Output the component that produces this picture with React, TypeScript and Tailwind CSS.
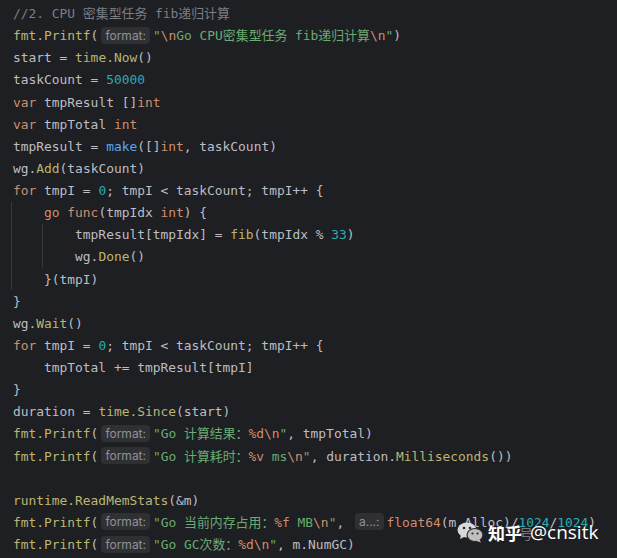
import type { ReactNode } from "react";

type Kind = "d" | "k" | "s" | "n" | "f" | "b" | "c";
type Tok = [string, Kind] | { hint: string };

const colors: Record<Kind, string> = {
  d: "text-[#bcbec4]",
  k: "text-[#cf8e6d]",
  s: "text-[#6aab73]",
  n: "text-[#2aacb8]",
  f: "text-[#bbb673]",
  b: "text-[#56a8f5]",
  c: "text-[#7a7e85]",
};

const printf: Tok[] = [["fmt.Printf", "f"], ["(", "d"], { hint: "format:" }];

const lines: Tok[][] = [
  [["//2. CPU 密集型任务 fib递归计算", "c"]],
  [...printf, ['"', "s"], ["\\n", "k"], ["Go CPU密集型任务 fib递归计算", "s"], ["\\n", "k"], ['"', "s"], [")", "d"]],
  [["start = ", "d"], ["time.Now", "f"], ["()", "d"]],
  [["taskCount = ", "d"], ["50000", "n"]],
  [["var", "k"], [" tmpResult []", "d"], ["int", "k"]],
  [["var", "k"], [" tmpTotal ", "d"], ["int", "k"]],
  [["tmpResult = ", "d"], ["make", "b"], ["([]", "d"], ["int", "k"], [", taskCount)", "d"]],
  [["wg.", "d"], ["Add", "f"], ["(taskCount)", "d"]],
  [["for", "k"], [" tmpI = ", "d"], ["0", "n"], ["; tmpI < taskCount; tmpI++ {", "d"]],
  [["    ", "d"], ["go func", "k"], ["(tmpIdx ", "d"], ["int", "k"], [") {", "d"]],
  [["        tmpResult[tmpIdx] = ", "d"], ["fib", "f"], ["(tmpIdx % ", "d"], ["33", "n"], [")", "d"]],
  [["        wg.", "d"], ["Done", "f"], ["()", "d"]],
  [["    }(tmpI)", "d"]],
  [["}", "d"]],
  [["wg.", "d"], ["Wait", "f"], ["()", "d"]],
  [["for", "k"], [" tmpI = ", "d"], ["0", "n"], ["; tmpI < taskCount; tmpI++ {", "d"]],
  [["    tmpTotal += tmpResult[tmpI]", "d"]],
  [["}", "d"]],
  [["duration = ", "d"], ["time.Since", "f"], ["(start)", "d"]],
  [...printf, ['"Go 计算结果：', "s"], ["%d\\n", "k"], ['"', "s"], [", tmpTotal)", "d"]],
  [...printf, ['"Go 计算耗时：', "s"], ["%v", "k"], [" ms", "s"], ["\\n", "k"], ['"', "s"], [", duration.", "d"], ["Milliseconds", "f"], ["())", "d"]],
  [],
  [["runtime.ReadMemStats", "f"], ["(&m)", "d"]],
  [...printf, ['"Go 当前内存占用：', "s"], ["%f", "k"], [" MB", "s"], ["\\n", "k"], ['"', "s"], [", ", "d"], { hint: "a...:" }, ["float64", "k"], ["(m.Alloc)/", "d"], ["1024", "n"], ["/", "d"], ["1024", "n"], [")", "d"]],
  [...printf, ['"Go GC次数：', "s"], ["%d\\n", "k"], ['"', "s"], [", m.NumGC)", "d"]],
];

const Hint = ({ children }: { children: ReactNode }) => (
  <span className="inline-block align-middle mx-[3px] -mt-[3px] px-[4px] h-[17px] leading-[17px] rounded-[4px] bg-[#2f3033] text-[#8f9298] text-[12px] font-['Inter',sans-serif]">
    {children}
  </span>
);

const WeChatIcon = () => (
  <svg width="27" height="21" viewBox="0 0 27 21">
    <ellipse cx="10" cy="8" rx="9.5" ry="7.5" fill="#d9d9d9" />
    <path d="M4 13 L3 17 L8 14.5 Z" fill="#d9d9d9" />
    <ellipse cx="18" cy="13" rx="8" ry="6.5" fill="#bfbfbf" stroke="#2a2b2e" strokeWidth="1.2" />
    <path d="M22.5 17.5 L24 20.5 L19 18.8 Z" fill="#bfbfbf" />
    <circle cx="7" cy="6" r="1.3" fill="#2a2b2e" />
    <circle cx="13" cy="6" r="1.3" fill="#2a2b2e" />
    <circle cx="15.5" cy="11.5" r="1.1" fill="#2a2b2e" />
    <circle cx="20.5" cy="11.5" r="1.1" fill="#2a2b2e" />
  </svg>
);

const App = () => {
  return (
    <div className="relative min-h-screen w-full overflow-hidden bg-[#1e1f22]">
      <div className="relative pt-[3px] pl-[13px] font-['DejaVu_Sans_Mono','Noto_Sans_CJK_SC',monospace] text-[12.9px] leading-[22.125px] whitespace-pre">
        {lines.map((line, i) => (
          <div key={i} className="h-[22.125px]">
            {line.map((t, j) =>
              Array.isArray(t) ? (
                <span key={j} className={colors[t[1]]}>
                  {t[0]}
                </span>
              ) : (
                <Hint key={j}>{t.hint}</Hint>
              )
            )}
          </div>
        ))}

        {/* indent guides */}
        <div className="absolute left-[11px] top-[202px] h-[88px] w-px bg-[#37393d]" />
        <div className="absolute left-[42px] top-[224px] h-[44px] w-px bg-[#37393d]" />
      </div>

      {/* watermark */}
      <div className="absolute left-[457px] top-[522px] flex items-center">
        <WeChatIcon />
        <span className="ml-[4px] text-[17px] font-bold text-white font-['Noto_Sans_CJK_SC',sans-serif] leading-none">
          知乎
        </span>
        <span className="-ml-[3px] text-[14px] text-[#77797d] font-['Noto_Sans_CJK_SC',sans-serif] leading-none">
          号
        </span>
        <span className="-ml-[3px] text-[19px] text-white font-['Open_Sans',sans-serif] leading-none">
          @cnsitk
        </span>
      </div>
    </div>
  );
};

export default App;
